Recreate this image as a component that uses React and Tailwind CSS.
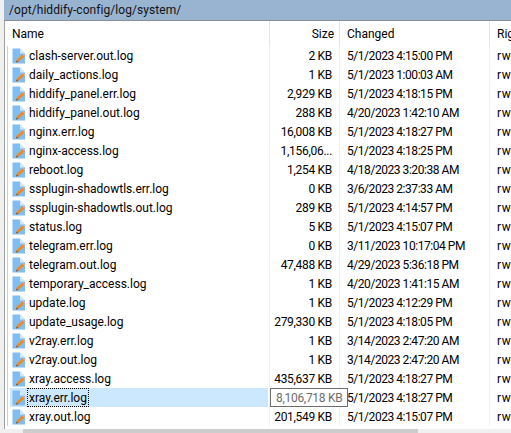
const FILES = [
  ["clash-server.out.log", "2 KB", "5/1/2023 4:15:00 PM"],
  ["daily_actions.log", "1 KB", "5/1/2023 1:00:03 AM"],
  ["hiddify_panel.err.log", "2,929 KB", "5/1/2023 4:18:15 PM"],
  ["hiddify_panel.out.log", "288 KB", "4/20/2023 1:42:10 AM"],
  ["nginx.err.log", "16,008 KB", "5/1/2023 4:18:27 PM"],
  ["nginx-access.log", "1,156,06...", "5/1/2023 4:18:25 PM"],
  ["reboot.log", "1,254 KB", "4/18/2023 3:20:38 AM"],
  ["ssplugin-shadowtls.err.log", "0 KB", "3/6/2023 2:37:33 AM"],
  ["ssplugin-shadowtls.out.log", "289 KB", "5/1/2023 4:14:57 PM"],
  ["status.log", "5 KB", "5/1/2023 4:15:07 PM"],
  ["telegram.err.log", "0 KB", "3/11/2023 10:17:04 PM"],
  ["telegram.out.log", "47,488 KB", "4/29/2023 5:36:18 PM"],
  ["temporary_access.log", "1 KB", "4/20/2023 1:41:15 AM"],
  ["update.log", "1 KB", "5/1/2023 4:12:29 PM"],
  ["update_usage.log", "279,330 KB", "5/1/2023 4:18:05 PM"],
  ["v2ray.err.log", "1 KB", "3/14/2023 2:47:20 AM"],
  ["v2ray.out.log", "1 KB", "3/14/2023 2:47:20 AM"],
  ["xray.access.log", "435,637 KB", "5/1/2023 4:18:27 PM"],
  ["xray.err.log", "8,106,718 KB", "5/1/2023 4:18:27 PM"],
  ["xray.out.log", "201,549 KB", "5/1/2023 4:15:07 PM"],
];

function LogIcon() {
  return (
    <svg width="14" height="16" viewBox="0 0 14 16" className="shrink-0">
      <path d="M0.5 0.5H8L13 5.5V15.5H0.5Z" fill="#7fbdf2" />
      <path d="M8 0.5L13 5.5H8Z" fill="#d3e9fb" />
      <path d="M4 14.5L5 11.5L10.5 6.5L12.5 8.5L7 13.5Z" fill="#f08a1d" />
      <path d="M4 14.5L5 12.5L6 13.7Z" fill="#5a3a1a" />
      <path d="M10.5 6.5L11.4 5.7L13.3 7.7L12.5 8.5Z" fill="#f2a0a0" />
    </svg>
  );
}

export default function App() {
  return (
    <div className="w-[511px] h-[433px] overflow-hidden bg-[#f0f0f0] flex flex-col text-[12px] text-black font-['Roboto','Open_Sans',sans-serif]">
      <div className="h-[21px] shrink-0 ml-[4px] pl-[5px] bg-[#99b4d1] border-b border-[#8a8f96] text-[#111] flex items-center leading-none tracking-[0.06px]">
        /opt/hiddify-config/log/system/
      </div>
      <div className="flex-1 min-h-0 ml-[4px] border-l border-[#a0a0a0] bg-white flex flex-col">
        <div className="h-[25px] shrink-0 flex pl-[5px] leading-none">
          <div className="w-[260px] shrink-0 pl-[2px] flex items-center border-r border-[#e5e5e5]">Name</div>
          <div className="w-[70px] shrink-0 pr-[5px] flex items-center justify-end border-r border-[#e5e5e5]">Size</div>
          <div className="w-[150px] shrink-0 pl-[7px] flex items-center border-r border-[#e5e5e5]">Changed</div>
          <div className="w-[60px] shrink-0 pl-[7px] flex items-center">Rights</div>
        </div>
        <div className="ml-[2px] pl-[2px] border-l border-[#c6d3e6] flex flex-col">
          {FILES.map(([name, size, date]) => {
            const sel = name === "xray.err.log";
            return (
              <div key={name} className="h-[19px] flex leading-none whitespace-nowrap relative">
                <div className="w-[260px] shrink-0 flex border-r border-[#f0f0f0]">
                  <div className={`flex-1 mr-px pl-[2px] flex items-center gap-[3px] ${sel ? "bg-[#cce8ff]" : ""}`}>
                    <LogIcon />
                    <span className={sel ? "outline-1 outline-dotted outline-black px-px -ml-px pt-[3px] pb-[2px]" : "pt-px"}>{name}</span>
                  </div>
                </div>
                <div className="w-[70px] shrink-0 pt-px pr-[7px] flex items-center justify-end border-r border-[#f0f0f0] tracking-[-0.3px]">{sel ? "" : size}</div>
                <div className="w-[150px] shrink-0 pt-px pl-[7px] flex items-center border-r border-[#f0f0f0] tracking-[-0.45px]">{date}</div>
                <div className="w-[60px] shrink-0 pt-px pl-[7px] flex items-center tracking-[0.5px]">rw-r--r--</div>
                {sel && (
                  <div className="absolute left-[260px] top-0 w-[78px] h-[19px] pt-px border border-[#6d6d6d] bg-white text-[#6d6d6d] flex items-center pl-[5px] tracking-[-0.3px]">
                    {size}
                  </div>
                )}
              </div>
            );
          })}
        </div>
      </div>
      <div className="h-[4px] shrink-0 pl-[23px] bg-[#f0f0f0]">
        <div className="w-[395px] h-full bg-[#cdcdcd]" />
      </div>
    </div>
  );
}
